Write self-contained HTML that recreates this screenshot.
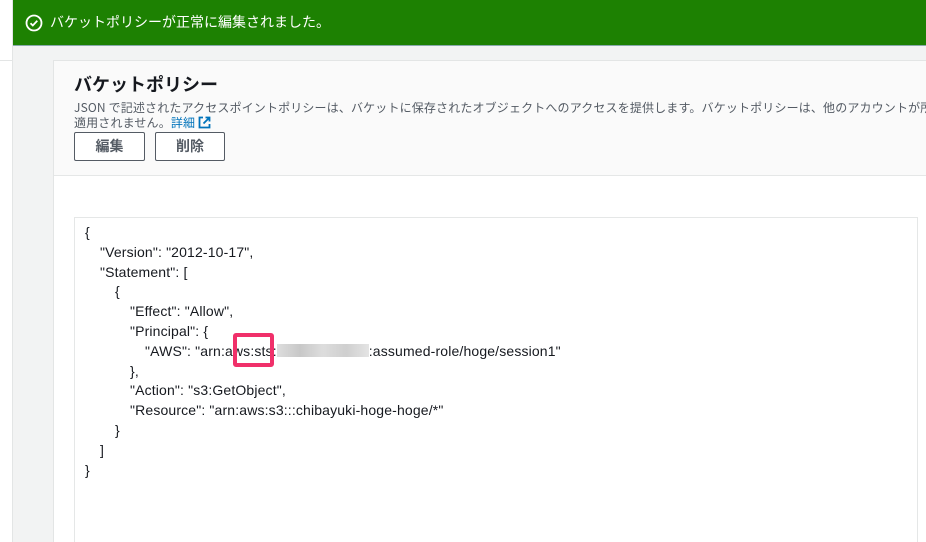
<!DOCTYPE html>
<html><head><meta charset="utf-8"><style>
*{margin:0;padding:0;box-sizing:border-box}
html,body{width:926px;height:542px;overflow:hidden}
body{background:#f2f3f3;font-family:"Liberation Sans","Noto Sans CJK JP",sans-serif;position:relative}
.side{position:absolute;left:0;top:0;width:13px;height:542px;background:#fff;border-right:1px solid #e3e5e5}
.side .l{position:absolute;left:0;top:60px;width:13px;height:1px;background:#e3e5e5}
.banner{position:absolute;left:13px;top:0;width:913px;height:46px;background:#1d8102;color:#fff;font-size:14px;border-bottom:1px solid #8aa}
.banner span{position:absolute;left:37px;top:12px;font-family:"Noto Sans CJK JP",sans-serif}
.banner svg{position:absolute;left:12px;top:14px}
.card{position:absolute;left:53px;top:60px;width:873px;height:482px;background:#fff;border-left:1px solid #e3e5e5;border-top:1px solid #e3e5e5;overflow:hidden}
.hdr{height:115px;background:#fafafa;border-bottom:1px solid #e5e7e7;position:relative}
h2{position:absolute;left:20px;top:10px;font-size:18px;font-weight:bold;color:#16191f;font-family:"Noto Sans CJK JP",sans-serif}
.desc{position:absolute;left:20px;top:39px;font-size:12px;line-height:15px;color:#545b64;white-space:nowrap;letter-spacing:0.15px;font-family:"Noto Sans CJK JP",sans-serif}
.desc a{color:#0073bb}
.btn{position:absolute;top:71px;height:29px;border:1px solid #545b64;border-radius:2px;background:#fff;font-size:14px;font-weight:bold;color:#545b64;text-align:center;line-height:27px;font-family:"Noto Sans CJK JP",sans-serif}
.code{position:absolute;left:20px;top:156px;width:844px;height:326px;border:1px solid #e5e7e7;border-bottom:none;background:#fff}
.lines{position:absolute;left:10px;top:5px;font-size:14px;line-height:19.8px;color:#16191f;letter-spacing:0.15px;white-space:pre}
.blur{display:inline-block;width:92px;height:13px;background:linear-gradient(90deg,#ddd,#c8c8c8,#ddd,#cfcfcf,#e4e4e4);vertical-align:-1px}
.pink{position:absolute;left:233px;top:333px;width:41px;height:34px;border:4px solid #f0306a;border-radius:3px}
</style></head><body>
<div class="side"><div class="l"></div></div>
<div class="banner"><svg width="18" height="18" viewBox="0 0 18 18"><circle cx="9" cy="9" r="7.5" fill="none" stroke="#fff" stroke-width="1.8"/><path d="M5.5 9.2l2.3 2.3 4.5-4.7" fill="none" stroke="#fff" stroke-width="1.8"/></svg><span>バケットポリシーが正常に編集されました。</span></div>
<div class="card">
<div class="hdr">
<h2>バケットポリシー</h2>
<div class="desc">JSON で記述されたアクセスポイントポリシーは、バケットに保存されたオブジェクトへのアクセスを提供します。バケットポリシーは、他のアカウントが所有するオブジェクトには<br>適用されません。<a>詳細 <svg width="13" height="13" viewBox="0 0 13 13" style="vertical-align:-2px"><path d="M5 1.5H1.5v10h10V8M7.5 1.5h4v4M11.5 1.5L5.5 7.5" fill="none" stroke="#0073bb" stroke-width="1.8"/></svg></a></div>
<div class="btn" style="left:20px;width:71px">編集</div>
<div class="btn" style="left:101px;width:70px">削除</div>
</div>
<div class="code"><div class="lines"><div>{</div><div style="margin-left:15px">"Version": "2012-10-17",</div><div style="margin-left:15px">"Statement": [</div><div style="margin-left:30px">{</div><div style="margin-left:45px">"Effect": "Allow",</div><div style="margin-left:45px">"Principal": {</div><div style="margin-left:60px">"AWS": "arn:aws:sts:<span class="blur"></span>:assumed-role/hoge/session1"</div><div style="margin-left:45px">},</div><div style="margin-left:45px">"Action": "s3:GetObject",</div><div style="margin-left:45px">"Resource": "arn:aws:s3:::chibayuki-hoge-hoge/*"</div><div style="margin-left:30px">}</div><div style="margin-left:15px">]</div><div>}</div></div></div>
</div>
<div class="pink"></div>
</body></html>
